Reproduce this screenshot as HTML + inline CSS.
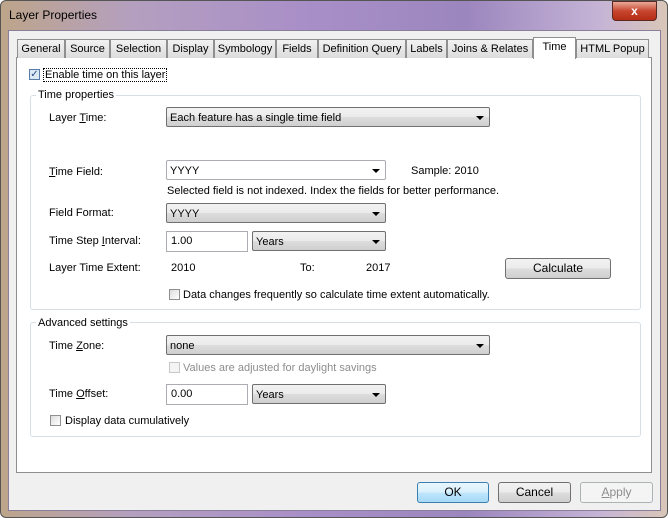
<!DOCTYPE html>
<html><head><style>
body{margin:0;width:668px;height:518px;overflow:hidden;font-family:"Liberation Sans",sans-serif;font-size:11px;color:#000;position:relative;background:#fff}
.a{position:absolute}
.win{left:0;top:0;width:666px;height:516px;border:1px solid #555;border-radius:6px;background:linear-gradient(90deg,#bda58a 0%,#b49fc0 20%,#a98fc7 45%,#9c86be 70%,#c6b4d6 90%,#d9c6b8 100%)}
.client{left:8px;top:30px;width:651px;height:479px;background:#f0f0f0;border:1px solid #8a7f99}
.tab{position:absolute;top:39px;height:18px;border:1px solid #8e8f8f;border-bottom:none;background:linear-gradient(#f2f2f2,#dcdcdc);text-align:center;line-height:18px}
.page{left:16px;top:57px;width:634px;height:414px;background:#fff;border:1px solid #8e8f8f}
.grp{border:1px solid #d5dfe5;border-radius:3px}
.gl{background:#fff;padding:0 2px}
.cmb{height:20px;border:1px solid #707070;border-radius:2px;background:linear-gradient(#f2f2f2 0%,#ebebeb 50%,#dddddd 51%,#cfcfcf 100%);line-height:20px;padding-left:3px;box-sizing:border-box}
.cmb.w{background:#fff;border-color:#abadb3}
.arr{position:absolute;right:5px;top:8px;width:0;height:0;border-left:4px solid transparent;border-right:4px solid transparent;border-top:4px solid #000}
.txt{height:21px;border:1px solid #abadb3;box-sizing:border-box;line-height:19px;padding-left:4px;background:#fff}
.cb{width:11px;height:11px;border:1px solid #8f8f8f;background:linear-gradient(135deg,#dcdcdc,#fff);box-sizing:border-box}
.btn{height:21px;border:1px solid #707070;border-radius:3px;background:linear-gradient(#f2f2f2 0%,#ebebeb 50%,#dddddd 51%,#cfcfcf 100%);text-align:center;line-height:19px;box-sizing:border-box;font-size:12px}
u{text-decoration:underline}
</style></head><body>
<div class="a win"></div>
<div class="a" style="left:9px;top:8px;font-size:12px">Layer Properties</div>
<div class="a" style="left:612px;top:1px;width:43px;height:18px;border:1px solid #5a2a22;border-radius:0 0 4px 4px;background:linear-gradient(#e9a99a,#c7452e 50%,#b52c14);color:#fff;font-weight:bold;text-align:center;line-height:18px;font-size:12px">x</div>
<div class="a client"></div>
<div class="a page"></div>
<div class="tab" style="left:17px;width:46px">General</div>
<div class="tab" style="left:65px;width:43px">Source</div>
<div class="tab" style="left:110px;width:55px">Selection</div>
<div class="tab" style="left:167px;width:45px">Display</div>
<div class="tab" style="left:214px;width:60px">Symbology</div>
<div class="tab" style="left:276px;width:40px">Fields</div>
<div class="tab" style="left:318px;width:86px">Definition Query</div>
<div class="tab" style="left:406px;width:39px">Labels</div>
<div class="tab" style="left:447px;width:84px">Joins &amp; Relates</div>
<div class="tab" style="left:533px;top:37px;width:41px;height:21px;background:#fff;line-height:18px">Time</div>
<div class="tab" style="left:576px;width:71px">HTML Popup</div>

<div class="a cb" style="left:29px;top:69px;background:#dde8f5;border-color:#5a7aa8;color:#2a4a8a;font-size:10px;line-height:9px;text-align:center">✓</div>
<div class="a" style="left:43px;top:68px;border:1px dotted #000;padding:0 1px">Enable time on this layer</div>

<div class="a grp" style="left:30px;top:95px;width:609px;height:213px"></div>
<div class="a gl" style="left:36px;top:89px">Time properties</div>
<div class="a" style="left:49px;top:112px"><span>Layer <u>T</u>ime:</span></div>
<div class="a cmb" style="left:166px;top:107px;width:324px">Each feature has a single time field<div class="arr"></div></div>
<div class="a" style="left:49px;top:166px"><u>T</u>ime Field:</div>
<div class="a cmb w" style="left:166px;top:160px;width:220px">YYYY<div class="arr"></div></div>
<div class="a" style="left:411px;top:165px">Sample: 2010</div>
<div class="a" style="left:167px;top:185px">Selected field is not indexed. Index the fields for better performance.</div>
<div class="a" style="left:49px;top:207px">Field Format:</div>
<div class="a cmb" style="left:166px;top:203px;width:220px">YYYY<div class="arr"></div></div>
<div class="a" style="left:49px;top:235px">Time Step <u>I</u>nterval:</div>
<div class="a txt" style="left:166px;top:231px;width:82px">1.00</div>
<div class="a cmb" style="left:252px;top:231px;width:134px">Years<div class="arr"></div></div>
<div class="a" style="left:49px;top:262px">Layer Time Extent:</div>
<div class="a" style="left:171px;top:262px">2010</div>
<div class="a" style="left:300px;top:262px">To:</div>
<div class="a" style="left:366px;top:262px">2017</div>
<div class="a btn" style="left:505px;top:258px;width:106px">Calculate</div>
<div class="a cb" style="left:169px;top:289px"></div>
<div class="a" style="left:183px;top:289px">Data changes frequently so calculate time extent automatically.</div>

<div class="a grp" style="left:30px;top:322px;width:609px;height:113px"></div>
<div class="a gl" style="left:36px;top:317px">Advanced settings</div>
<div class="a" style="left:49px;top:340px">Time <u>Z</u>one:</div>
<div class="a cmb" style="left:166px;top:335px;width:324px">none<div class="arr"></div></div>
<div class="a cb" style="left:169px;top:362px;border-color:#c8c8c8;background:#f4f4f4"></div>
<div class="a" style="left:183px;top:362px;color:#8d8d8d">Values are adjusted for daylight savings</div>
<div class="a" style="left:49px;top:388px">Time <u>O</u>ffset:</div>
<div class="a txt" style="left:166px;top:384px;width:82px">0.00</div>
<div class="a cmb" style="left:252px;top:384px;width:134px">Years<div class="arr"></div></div>
<div class="a cb" style="left:50px;top:415px"></div>
<div class="a" style="left:65px;top:415px">Display data cumulatively</div>

<div class="a btn" style="left:417px;top:482px;width:72px;border-color:#3c7fb1;background:linear-gradient(#eaf6fd 0%,#d9f0fc 50%,#bee6fd 51%,#a7d9f5 100%)">OK</div>
<div class="a btn" style="left:498px;top:482px;width:73px">Cancel</div>
<div class="a btn" style="left:580px;top:482px;width:73px;border-color:#adb2b5;background:#f4f4f4;color:#8d8d8d"><u>A</u>pply</div>
</body></html>
